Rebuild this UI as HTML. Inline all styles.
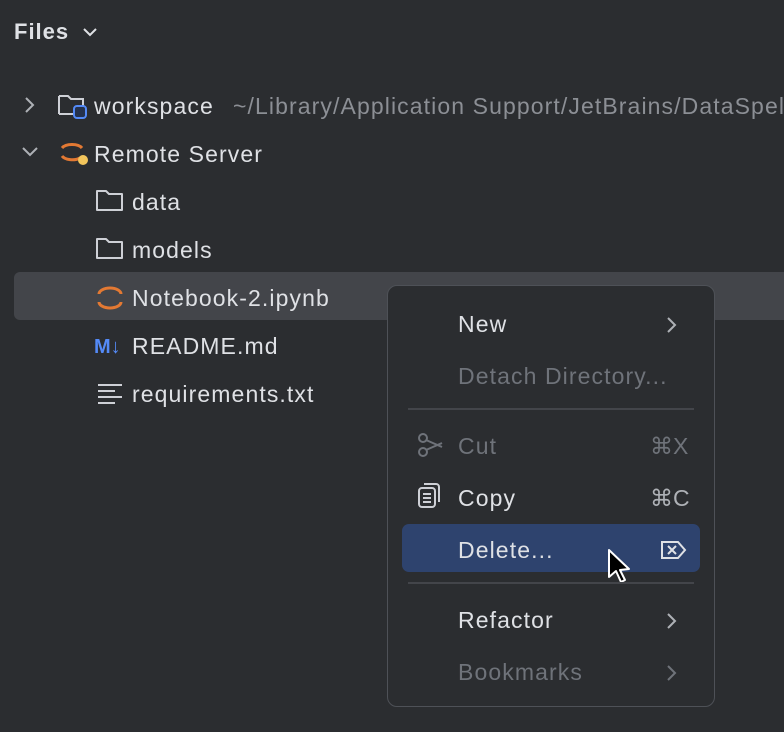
<!DOCTYPE html>
<html><head><style>
body{margin:0;width:784px;height:732px;background:#2b2d30;font-family:"Liberation Sans",sans-serif;color:#dfe1e5;overflow:hidden;position:relative}
.t{position:absolute;font-size:23px;letter-spacing:1.1px;white-space:nowrap;line-height:26px}
.sel{position:absolute;left:14px;top:272px;width:780px;height:48px;background:#43454a;border-radius:6px}
.menu{position:absolute;left:387px;top:285px;width:328px;height:422px;background:#2b2d30;border:1px solid #4e5157;border-radius:10px;box-sizing:border-box}
.sep{position:absolute;left:20px;width:286px;height:2px;background:#43454a}
.hl{position:absolute;left:14px;top:238px;width:298px;height:48px;background:#2e436e;border-radius:7px}
.dim{color:#6f737a}
svg{position:absolute}
</style></head><body>
<div class="t" style="left:14px;top:19px;font-weight:bold;font-size:22px;letter-spacing:1px">Files</div>
<svg style="left:82px;top:26px" width="16" height="12"><path d="M2 3l6 6 6-6" stroke="#dfe1e5" stroke-width="2" fill="none"/></svg>
<div class="sel"></div>
<svg style="left:22px;top:95px" width="14" height="20"><path d="M4 3l7 7-7 7" stroke="#aeb1b6" stroke-width="2" fill="none"/></svg>
<svg style="left:56px;top:90px" width="34" height="30"><path d="M3 6h9l3 3h12v7M27 24H3z" stroke="#ced0d6" stroke-width="2" fill="none"/><path d="M3 6v18" stroke="#ced0d6" stroke-width="2"/><rect x="18" y="16" width="12" height="12" rx="3" fill="#25324d" stroke="#548af7" stroke-width="2"/></svg>
<div class="t" style="left:94px;top:93px">workspace</div>
<div class="t" style="left:233px;top:93px;color:#8c8f95">~/Library/Application Support/JetBrains/DataSpell</div>
<svg style="left:20px;top:144px" width="20" height="14"><path d="M3 4l7 7 7-7" stroke="#aeb1b6" stroke-width="2" fill="none"/></svg>
<svg style="left:56px;top:138px" width="36" height="32"><path d="M6 10a11 6 0 0 1 20 0" stroke="#e37933" stroke-width="3" fill="none"/><path d="M6 18a11 6 0 0 0 18 2" stroke="#e37933" stroke-width="3" fill="none"/><circle cx="27" cy="22" r="5" fill="#f2c55c"/></svg>
<div class="t" style="left:94px;top:141px">Remote Server</div>
<svg style="left:95px;top:187px" width="30" height="28"><path d="M2 4h9l3 3h13v16H2z" stroke="#ced0d6" stroke-width="2" fill="none" stroke-linejoin="round"/></svg>
<div class="t" style="left:132px;top:189px">data</div>
<svg style="left:95px;top:235px" width="30" height="28"><path d="M2 4h9l3 3h13v16H2z" stroke="#ced0d6" stroke-width="2" fill="none" stroke-linejoin="round"/></svg>
<div class="t" style="left:132px;top:237px">models</div>
<svg style="left:95px;top:284px" width="30" height="28"><path d="M4 10a11 6 0 0 1 22 0" stroke="#e37933" stroke-width="3" fill="none"/><path d="M4 18a11 6 0 0 0 22 0" stroke="#e37933" stroke-width="3" fill="none"/></svg>
<div class="t" style="left:132px;top:285px">Notebook-2.ipynb</div>
<div class="t" style="left:94px;top:334px;color:#548af7;font-weight:bold;font-size:20px;letter-spacing:0">M↓</div>
<div class="t" style="left:132px;top:333px">README.md</div>
<svg style="left:97px;top:382px" width="26" height="24"><path d="M1 3h24M1 9h17M1 15h24M1 21h17" stroke="#ced0d6" stroke-width="2"/></svg>
<div class="t" style="left:132px;top:381px">requirements.txt</div>

<div class="menu">
<div class="t" style="left:70px;top:25px">New</div>
<svg style="left:276px;top:29px" width="14" height="20"><path d="M4 3l7 7-7 7" stroke="#aeb1b6" stroke-width="2" fill="none"/></svg>
<div class="t dim" style="left:70px;top:77px">Detach Directory...</div>
<div class="sep" style="top:122px"></div>
<svg style="left:29px;top:146px" width="28" height="26"><circle cx="6" cy="6" r="4" stroke="#6f737a" stroke-width="2" fill="none"/><circle cx="6" cy="20" r="4" stroke="#6f737a" stroke-width="2" fill="none"/><path d="M9 8l16 7M9 18l16-7" stroke="#6f737a" stroke-width="2"/></svg>
<div class="t dim" style="left:70px;top:147px">Cut</div>
<div class="t dim" style="left:262px;top:147px;letter-spacing:0">⌘X</div>
<svg style="left:29px;top:196px" width="26" height="28"><rect x="2" y="6" width="16" height="19" rx="3" stroke="#ced0d6" stroke-width="2" fill="none"/><path d="M7 2h12a3 3 0 0 1 3 3v15" stroke="#ced0d6" stroke-width="2" fill="none"/><path d="M6 12h8M6 16h8M6 20h8" stroke="#ced0d6" stroke-width="2"/></svg>
<div class="t" style="left:70px;top:199px">Copy</div>
<div class="t" style="left:262px;top:199px;color:#aeb1b6;letter-spacing:0">⌘C</div>
<div class="hl"></div>
<div class="t" style="left:70px;top:251px">Delete...</div>
<svg style="left:272px;top:254px" width="28" height="20"><path d="M2 2h16l7 8-7 8H2z" stroke="#dfe1e5" stroke-width="2" fill="none"/><path d="M8 6l8 8M16 6l-8 8" stroke="#dfe1e5" stroke-width="2"/></svg>
<svg style="left:218px;top:262px" width="26" height="38"><path d="M3 2v27l7-6 5 11 4-2-5-10 9-1z" fill="#000" stroke="#fff" stroke-width="2" stroke-linejoin="round"/></svg>
<div class="sep" style="top:296px"></div>
<div class="t" style="left:70px;top:321px">Refactor</div>
<svg style="left:276px;top:325px" width="14" height="20"><path d="M4 3l7 7-7 7" stroke="#aeb1b6" stroke-width="2" fill="none"/></svg>
<div class="t dim" style="left:70px;top:373px">Bookmarks</div>
<svg style="left:276px;top:377px" width="14" height="20"><path d="M4 3l7 7-7 7" stroke="#6f737a" stroke-width="2" fill="none"/></svg>
</div>
</body></html>
